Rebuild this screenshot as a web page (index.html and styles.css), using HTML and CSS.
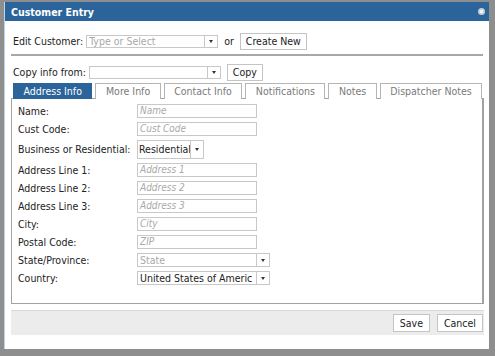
FILE: index.html
```html
<!DOCTYPE html>
<html>
<head>
<meta charset="utf-8">
<link rel="stylesheet" href="styles.css">
</head>
<body>
<div class="dialog">
  <div class="titlebar">
    <span class="title">Customer Entry</span>
    <span class="close">
      <svg width="7" height="7" viewBox="0 0 8 8"><circle cx="4" cy="4" r="4" fill="#c9ced6"/><path d="M2.5 2.5 L5.5 5.5 M5.5 2.5 L2.5 5.5" stroke="#fff" stroke-width="1.2"/></svg>
    </span>
  </div>
  <div class="content">
    <div class="row-top">
      <span class="lbl">Edit Customer:</span>
      <div class="combo combo-edit">
        <span class="combo-text ph">Type or Select</span>
        <span class="arrow"><i></i></span>
      </div>
      <span class="or">or</span>
      <button class="btn">Create New</button>
    </div>
    <div class="divider"></div>
    <div class="row-copy">
      <span class="lbl">Copy info from:</span>
      <div class="combo combo-copy">
        <span class="combo-text"></span>
        <span class="arrow"><i></i></span>
      </div>
      <button class="btn">Copy</button>
    </div>
    <div class="tabs">
      <span class="tab active">Address Info</span>
      <span class="tab">More Info</span>
      <span class="tab">Contact Info</span>
      <span class="tab">Notifications</span>
      <span class="tab">Notes</span>
      <span class="tab">Dispatcher Notes</span>
    </div>
    <div class="panel">
      <div class="form">
        <span class="flbl">Name:</span>
        <div class="field"><span class="inp ph">Name</span></div>
        <span class="flbl">Cust Code:</span>
        <div class="field"><span class="inp ph">Cust Code</span></div>
        <span class="flbl tall">Business or Residential:</span>
        <div class="field tall"><div class="sel"><span class="sel-text">Residential</span><span class="arrow"><i></i></span></div></div>
        <span class="flbl">Address Line 1:</span>
        <div class="field"><span class="inp ph">Address 1</span></div>
        <span class="flbl">Address Line 2:</span>
        <div class="field"><span class="inp ph">Address 2</span></div>
        <span class="flbl">Address Line 3:</span>
        <div class="field"><span class="inp ph">Address 3</span></div>
        <span class="flbl">City:</span>
        <div class="field"><span class="inp ph">City</span></div>
        <span class="flbl">Postal Code:</span>
        <div class="field"><span class="inp ph">ZIP</span></div>
        <span class="flbl">State/Province:</span>
        <div class="field"><div class="combo combo-wide"><span class="combo-text ph">State</span><span class="arrow"><i></i></span></div></div>
        <span class="flbl">Country:</span>
        <div class="field"><div class="combo combo-wide"><span class="combo-text">United States of Americ</span><span class="arrow"><i></i></span></div></div>
      </div>
    </div>
    <div class="footer">
      <button class="btn">Save</button>
      <button class="btn">Cancel</button>
    </div>
  </div>
</div>
</body>
</html>
```
FILE: styles.css
```css
html, body {
  margin: 0;
  padding: 0;
}
body {
  width: 495px;
  height: 356px;
  background: #8e8e8e;
  overflow: hidden;
  font-family: "DejaVu Sans Condensed", "DejaVu Sans", Verdana, sans-serif;
  font-stretch: condensed;
  font-size: 10.5px;
  color: #222;
}
.dialog {
  margin: 2px 0 0 4px;
  width: 485px;
  height: 347px;
  background: #fff;
  border-left: 1px solid #bcd3ea;
  box-sizing: border-box;
}
.titlebar {
  height: 19px;
  background: #2a649a;
  color: #fff;
  display: flex;
  align-items: center;
  justify-content: space-between;
  padding: 0 4px 0 6px;
}
.title {
  font-weight: bold;
  font-size: 10.5px;
}
.close {
  display: flex;
  margin-top: -1px;
}
.content {
  padding: 0 5px 0 6px;
}
.row-top {
  display: flex;
  align-items: center;
  height: 18px;
  margin-top: 11px;
  padding-left: 2px;
}
.lbl {
  margin-right: 3px;
  white-space: nowrap;
}
.combo {
  display: flex;
  height: 13px;
  border: 1px solid #c8c8c8;
  box-sizing: border-box;
  background: #fff;
}
.combo-text {
  flex: 1;
  line-height: 11px;
  padding-left: 2px;
  white-space: nowrap;
  overflow: hidden;
}
.combo-edit { width: 132px; }
.combo-copy { width: 132px; }
.combo-wide { width: 133px; }
.ph {
  color: #a9a9a9;
}
.arrow {
  width: 12px;
  flex-shrink: 0;
  border-left: 1px solid #c8c8c8;
  display: flex;
  align-items: center;
  justify-content: center;
}
.arrow i {
  width: 0;
  height: 0;
  border-left: 2.5px solid transparent;
  border-right: 2.5px solid transparent;
  border-top: 3px solid #333;
}
.or {
  margin: 0 6px 0 6px;
}
.btn {
  font-family: "DejaVu Sans Condensed", "DejaVu Sans", Verdana, sans-serif;
  font-stretch: condensed;
  font-size: 10.5px;
  color: #222;
  background: #fff;
  border: 1px solid #c4c4c4;
  height: 17px;
  padding: 0 5px;
  margin: 0;
  line-height: 15px;
}
.divider {
  height: 2px;
  background: #a8a8a8;
  margin: 4px 0 0 0;
  width: 472px;
}
.row-copy {
  display: flex;
  align-items: center;
  height: 18px;
  margin-top: 7px;
  padding-left: 2px;
}
.row-copy .btn {
  margin-left: 6px;
}
.tabs {
  display: flex;
  gap: 3px;
  margin-top: 2px;
  padding-left: 2px;
  height: 16px;
}
.tab {
  flex-shrink: 0;
  white-space: nowrap;
  border: 1px solid #b5b5b5;
  border-bottom: none;
  color: #7a7a7a;
  line-height: 15px;
  padding: 0 9.5px;
  background: #fff;
}
.tab.active {
  background: #2a649a;
  border-color: #2a649a;
  color: #fff;
  padding: 0 9.5px;
}
.panel {
  width: 473px;
  height: 206px;
  box-sizing: border-box;
  border: 1px solid #a2a2a2;
  border-right-width: 2px;
  margin-top: -1px;
}
.form {
  display: grid;
  grid-template-columns: 119px 1fr;
  padding: 5px 0 0 6px;
  row-gap: 4px;
}
.flbl {
  height: 14px;
  line-height: 14px;
  white-space: nowrap;
}
.field {
  height: 14px;
}
.flbl.tall, .field.tall {
  height: 19px;
  line-height: 19px;
  margin-top: 0;
  margin-bottom: 0;
}
.inp {
  display: block;
  width: 120px;
  height: 14px;
  box-sizing: border-box;
  border: 1px solid #c8c8c8;
  font-style: italic;
  font-size: 10px;
  line-height: 12px;
  padding-left: 2px;
}
.field .combo {
  height: 14px;
}
.field .combo-text {
  line-height: 12px;
}
.sel {
  display: flex;
  width: 67px;
  height: 19px;
  border: 1px solid #c8c8c8;
  box-sizing: border-box;
}
.sel-text {
  flex: 1;
  line-height: 17px;
  padding-left: 1px;
  overflow: hidden;
  white-space: nowrap;
}
.sel .arrow {
  width: 12px;
}
.footer {
  width: 473px;
  height: 25px;
  margin-top: 6px;
  background: #ececec;
  border-top: 1px solid #d9d9d9;
  display: flex;
  align-items: center;
  justify-content: flex-end;
  gap: 7px;
  padding-right: 1px;
  box-sizing: border-box;
}
.footer .btn {
  padding: 0 6px;
  height: 18px;
}
```
